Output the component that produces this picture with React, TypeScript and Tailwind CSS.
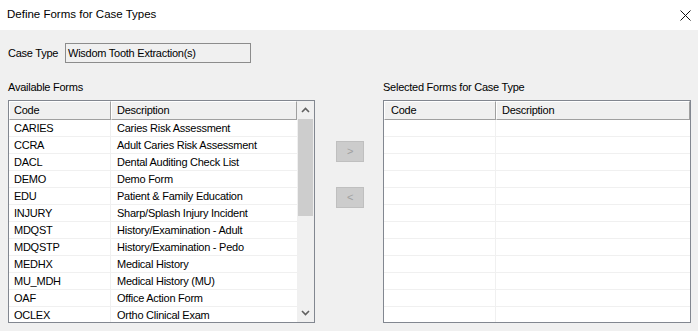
import React from "react";

const forms = [
  { code: "CARIES", desc: "Caries Risk Assessment" },
  { code: "CCRA", desc: "Adult Caries Risk Assessment" },
  { code: "DACL", desc: "Dental Auditing Check List" },
  { code: "DEMO", desc: "Demo Form" },
  { code: "EDU", desc: "Patient & Family Education" },
  { code: "INJURY", desc: "Sharp/Splash Injury Incident" },
  { code: "MDQST", desc: "History/Examination - Adult" },
  { code: "MDQSTP", desc: "History/Examination - Pedo" },
  { code: "MEDHX", desc: "Medical History" },
  { code: "MU_MDH", desc: "Medical History (MU)" },
  { code: "OAF", desc: "Office Action Form" },
  { code: "OCLEX", desc: "Ortho Clinical Exam" },
];

const HeaderCell = ({ label, className }: { label: string; className: string }) => (
  <div
    className={`h-full flex items-center bg-[#f0f0f0] border-t border-l border-t-white border-l-white border-r border-b border-r-[#a0a0a0] border-b-[#a0a0a0] ${className}`}
  >
    {label}
  </div>
);

const Chevron = ({ up }: { up?: boolean }) => (
  <svg width="9" height="6" viewBox="0 0 9 6">
    <path
      d={up ? "M1 5 L4.5 1.5 L8 5" : "M1 1 L4.5 4.5 L8 1"}
      fill="none"
      stroke="#606060"
      strokeWidth="1.6"
    />
  </svg>
);

const App = () => {
  const empty = Array.from({ length: 12 });

  return (
    <div className="w-[698px] h-[331px] flex flex-col font-['Liberation_Sans',Arial,sans-serif] text-[11px] tracking-[-0.25px] text-black overflow-hidden">
      <div className="h-[30px] bg-white flex items-center justify-between pl-[7px] pr-[7px] shrink-0">
        <div className="text-[11.5px] tracking-normal">Define Forms for Case Types</div>
        <svg width="11" height="11" viewBox="0 0 11 11" className="mr-[0px]">
          <path d="M0.5 0.5 L10.5 10.5 M10.5 0.5 L0.5 10.5" stroke="#111" strokeWidth="1" />
        </svg>
      </div>

      <div className="flex-1 bg-[#f0f0f0] pl-[8px] pt-[13px]">
        <div className="flex items-center h-[20px]">
          <div className="w-[57px]">Case Type</div>
          <div className="w-[186px] h-[20px] border border-[#8c8c8c] bg-[#f0f0f0] flex items-center pl-[2px]">
            Wisdom Tooth Extraction(s)
          </div>
        </div>

        <div className="flex mt-[17px]">
          {/* available */}
          <div className="w-[307px]">
            <div className="h-[14px] leading-[14px] mb-[6px]">Available Forms</div>
            <div className="h-[223px] border border-[#828790] bg-white flex overflow-hidden">
              <div className="w-[288px] flex flex-col">
                <div className="h-[19px] flex shrink-0">
                  <HeaderCell label="Code" className="w-[102px] pl-[4px]" />
                  <HeaderCell label="Description" className="flex-1 pl-[5px]" />
                </div>
                {forms.map((f) => (
                  <div key={f.code} className="h-[17px] shrink-0 flex border-b border-[#f0f0f0]">
                    <div className="w-[102px] pl-[5px] flex items-center border-r border-[#f0f0f0]">{f.code}</div>
                    <div className="flex-1 pl-[6px] flex items-center whitespace-nowrap">{f.desc}</div>
                  </div>
                ))}
              </div>
              <div className="w-[17px] bg-[#f0f0f0] flex flex-col items-center">
                <div className="h-[18px] flex items-center justify-center">
                  <Chevron up />
                </div>
                <div className="w-[15px] h-[97px] bg-[#cdcdcd]" />
                <div className="flex-1" />
                <div className="h-[18px] flex items-center justify-center">
                  <Chevron />
                </div>
              </div>
            </div>
          </div>

          {/* move buttons */}
          <div className="ml-[21px] w-[28px] flex flex-col pt-[61px] gap-[25px]">
            <button className="h-[21px] w-[28px] bg-[#cccccc] border border-[#bfbfbf] text-[#a0a0a0] flex items-center justify-center">
              &gt;
            </button>
            <button className="h-[21px] w-[28px] bg-[#cccccc] border border-[#bfbfbf] text-[#a0a0a0] flex items-center justify-center">
              &lt;
            </button>
          </div>

          {/* selected */}
          <div className="ml-[19px] w-[308px]">
            <div className="h-[14px] leading-[14px] mb-[6px]">Selected Forms for Case Type</div>
            <div className="h-[223px] border border-[#828790] bg-white flex flex-col overflow-hidden">
              <div className="h-[19px] flex shrink-0">
                <HeaderCell label="Code" className="w-[112px] pl-[6px]" />
                <HeaderCell label="Description" className="flex-1 pl-[5px]" />
              </div>
              {empty.map((_, i) => (
                <div key={i} className="h-[17px] shrink-0 flex border-b border-[#f0f0f0]">
                  <div className="w-[112px] border-r border-[#f0f0f0]" />
                  <div className="flex-1" />
                </div>
              ))}
            </div>
          </div>
        </div>
      </div>
    </div>
  );
};

export default App;
